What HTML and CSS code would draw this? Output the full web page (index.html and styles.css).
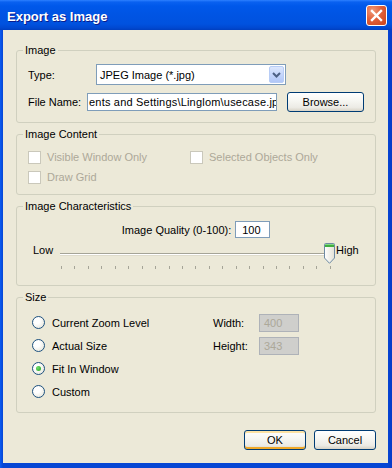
FILE: index.html
```html
<!DOCTYPE html>
<html>

<head>
    <link rel="stylesheet" href="styles.css">
</head>

<body>
    <div class="window">
        <div class="titlebar">
            <span class="title">Export as Image</span>
            <span class="close">
                <svg width="19" height="19" viewBox="0 0 19 19">
                    <path d="M5 5 L14 14 M14 5 L5 14" stroke="#fff" stroke-width="2.4" stroke-linecap="square" />
                </svg>
            </span>
        </div>
        <div class="client">
            <!-- Image -->
            <fieldset class="group group-image">
                <legend>Image</legend>
                <div class="row row-type">
                    <label class="lbl lbl-type">Type:</label>
                    <div class="select">
                        <span class="select-text">JPEG Image (*.jpg)</span>
                        <span class="select-btn">
                            <svg width="9" height="6" viewBox="0 0 9 6">
                                <polyline points="1,1 4.5,4.5 8,1" fill="none" stroke="#4d6185" stroke-width="2" />
                            </svg>
                        </span>
                    </div>
                </div>
                <div class="row row-file">
                    <label class="lbl lbl-file">File Name:</label>
                    <div class="edit edit-file"><span class="scrolled">ents and Settings\Linglom\usecase.jpg</span></div>
                    <button class="btn btn-browse">Browse...</button>
                </div>
            </fieldset>

            <!-- Image Content -->
            <fieldset class="group group-content">
                <legend>Image Content</legend>
                <div class="checks">
                    <div class="check disabled"><span class="box"></span>Visible Window Only</div>
                    <div class="check disabled"><span class="box"></span>Selected Objects Only</div>
                    <div class="check disabled"><span class="box"></span>Draw Grid</div>
                </div>
            </fieldset>

            <!-- Image Characteristics -->
            <fieldset class="group group-chars">
                <legend>Image Characteristics</legend>
                <div class="quality">
                    <span>Image Quality (0-100):</span>
                    <div class="edit edit-quality">100</div>
                </div>
                <div class="slider-row">
                    <span class="low">Low</span>
                    <div class="slider">
                        <div class="track"></div>
                        <div class="ticks">
                            <i></i><i></i><i></i><i></i><i></i><i></i><i></i>
                            <i></i><i></i><i></i><i></i><i></i><i></i><i></i>
                            <i></i><i></i><i></i><i></i><i></i><i></i><i></i>
                        </div>
                        <svg class="thumb" width="11" height="21" viewBox="0 0 11 21">
                            <defs>
                                <linearGradient id="tg" x1="0" y1="0" x2="1" y2="0">
                                    <stop offset="0" stop-color="#ffffff" />
                                    <stop offset="1" stop-color="#e3e1d6" />
                                </linearGradient>
                            </defs>
                            <path d="M0.5 1.5 Q0.5 0.5 1.5 0.5 H9.5 Q10.5 0.5 10.5 1.5 V15 L5.5 20.3 L0.5 15 Z" fill="url(#tg)" stroke="#6e8aa3" />
                            <rect x="1" y="1" width="9" height="3" fill="#3fae3f" />
                            <rect x="1" y="1" width="9" height="1" fill="#86d786" />
                        </svg>
                    </div>
                    <span class="high">High</span>
                </div>
            </fieldset>

            <!-- Size -->
            <fieldset class="group group-size">
                <legend>Size</legend>
                <div class="size-cols">
                    <div class="radios">
                        <div class="radio"><span class="dot"></span>Current Zoom Level</div>
                        <div class="radio"><span class="dot"></span>Actual Size</div>
                        <div class="radio checked"><span class="dot"></span>Fit In Window</div>
                        <div class="radio"><span class="dot"></span>Custom</div>
                    </div>
                    <div class="dims">
                        <div class="dim"><label>Width:</label><div class="edit edit-dim">400</div></div>
                        <div class="dim"><label>Height:</label><div class="edit edit-dim">343</div></div>
                    </div>
                </div>
            </fieldset>

            <div class="buttons">
                <button class="btn btn-default">OK</button>
                <button class="btn">Cancel</button>
            </div>
        </div>
    </div>
</body>

</html>
```

FILE: styles.css
```css
body {
    margin: 0;
    font-family: "Liberation Sans", Arial, sans-serif;
    font-size: 11px;
    color: #000;
}

.window {
    width: 392px;
    height: 468px;
    box-sizing: border-box;
    display: flex;
    flex-direction: column;
    background: linear-gradient(to right, #0b5cf2 0, #0646d4 3px, #0646d4 388px, #0838c6 392px);
}

.titlebar {
    height: 30px;
    flex: none;
    display: flex;
    align-items: center;
    justify-content: space-between;
    padding: 0 5px 0 7px;
    box-sizing: border-box;
    background: linear-gradient(#2d80ff 0, #0a61f0 2px, #0058ea 6px, #0054e3 15px, #0052df 24px, #0048d0 28px, #003fbf 30px);
}

.title {
    color: #fff;
    font-weight: bold;
    font-size: 13px;
    padding-top: 2px;
    text-shadow: 1px 1px #0a1d8c;
}

.close {
    width: 21px;
    height: 21px;
    box-sizing: border-box;
    border: 1px solid #fff;
    border-radius: 3px;
    background: radial-gradient(circle at 30% 25%, #ef9a78 0, #e2603a 45%, #cc4319 100%);
    display: flex;
    align-items: center;
    justify-content: center;
}

.client {
    flex: 1;
    margin: 0 4px 5px 3px;
    background: #ece9d8;
    padding: 14px 12px 0 13px;
    box-sizing: border-box;
}

/* group boxes */
.group {
    margin: 5px 0 0;
    border: 1px solid #d0d0bf;
    border-radius: 3px;
    padding: 0 11px;
    min-width: 0;
}

.group legend {
    padding: 0 2px;
    margin-left: -5px;
    line-height: 13px;
}

.group-image {
    margin-top: 0;
    padding-top: 7px;
    padding-bottom: 10px;
}

.row {
    display: flex;
    align-items: center;
}

.row-type {
    height: 21px;
}

.row-file {
    height: 20px;
    margin-top: 7px;
}

.lbl-type {
    width: 68px;
}

.lbl-file {
    width: 59px;
}

.select {
    width: 190px;
    height: 21px;
    box-sizing: border-box;
    border: 1px solid #7f9db9;
    background: #fff;
    display: flex;
    align-items: center;
    justify-content: space-between;
}

.select-text {
    padding-left: 3px;
}

.select-btn {
    width: 15px;
    height: 17px;
    margin-right: 1px;
    box-sizing: border-box;
    border: 1px solid #b8cdf6;
    border-radius: 2px;
    background: linear-gradient(#dce7fd, #c1d3fb 60%, #b1c7f7);
    display: flex;
    align-items: center;
    justify-content: center;
}

.edit {
    box-sizing: border-box;
    border: 1px solid #7f9db9;
    background: #fff;
    display: flex;
    align-items: center;
    overflow: hidden;
    white-space: nowrap;
}

.edit-file {
    width: 190px;
    height: 18px;
    letter-spacing: 0.2px;
}

.scrolled {
    padding-left: 1px;
}

.btn {
    font-family: "Liberation Sans", Arial, sans-serif;
    font-size: 11px;
    color: #000;
    height: 20px;
    box-sizing: border-box;
    border: 1px solid #003c74;
    border-radius: 3px;
    background: linear-gradient(#ffffff 0, #f7f7f3 40%, #ecebe5 80%, #d8d3c6 100%);
    padding: 0;
}

.btn-browse {
    width: 77px;
    margin-left: 10px;
}

/* image content */
.group-content {
    padding-top: 6px;
    padding-bottom: 7px;
}

.checks {
    display: grid;
    grid-template-columns: 162px auto;
    grid-auto-rows: 20px;
}

.check {
    display: flex;
    align-items: center;
}

.check .box {
    width: 13px;
    height: 13px;
    box-sizing: border-box;
    border: 1px solid #cac8bb;
    background: #fff;
    margin-right: 6px;
}

.check.disabled {
    color: #aca899;
}

/* image characteristics */
.group-chars {
    padding-top: 8px;
    padding-bottom: 16px;
}

.quality {
    height: 17px;
    display: flex;
    align-items: center;
    justify-content: center;
    gap: 4px;
}

.edit-quality {
    width: 35px;
    height: 17px;
    padding-left: 6px;
}

.slider-row {
    display: flex;
    align-items: flex-start;
    margin-top: 5px;
    padding-left: 5px;
}

.low {
    width: 23px;
    margin-top: 1px;
}

.high {
    margin-top: 1px;
}

.slider {
    position: relative;
    width: 280px;
    height: 26px;
    padding-top: 10px;
    box-sizing: border-box;
}

.track {
    height: 3px;
    margin: 0 6px 0 4px;
    box-sizing: border-box;
    border-top: 1px solid #a5a497;
    border-bottom: 1px solid #dedbcb;
    background: #fff;
}

.ticks {
    display: flex;
    justify-content: space-between;
    width: 270px;
    margin: 10px 0 0 5px;
}

.ticks i {
    width: 1px;
    height: 3px;
    background: #a5a497;
}

.thumb {
    position: absolute;
    left: 268px;
    top: 0;
}

/* size */
.group-size {
    padding-top: 7px;
    padding-bottom: 9px;
}

.size-cols {
    display: flex;
}

.radios {
    width: 185px;
}

.radio {
    height: 23px;
    display: flex;
    align-items: center;
}

.radio .dot {
    width: 13px;
    height: 13px;
    box-sizing: border-box;
    border: 1px solid #1c5180;
    border-radius: 50%;
    background: radial-gradient(circle at 35% 35%, #ffffff 30%, #e6e4d8 90%);
    margin: 0 7px 0 4px;
    display: flex;
    align-items: center;
    justify-content: center;
}

.radio.checked .dot::after {
    content: "";
    width: 5px;
    height: 5px;
    border-radius: 50%;
    background: radial-gradient(circle at 35% 35%, #6fdf6b, #21a121);
}

.dim {
    height: 23px;
    display: flex;
    align-items: center;
}

.dim label {
    width: 46px;
}

.edit-dim {
    width: 40px;
    height: 18px;
    padding-left: 4px;
    background: #cfcfcc;
    border-color: #aeb2b8;
    color: #aca899;
}

/* dialog buttons */
.buttons {
    display: flex;
    justify-content: flex-end;
    gap: 8px;
    margin-top: 17px;
}

.buttons .btn {
    width: 62px;
}

.btn-default {
    box-shadow: inset 0 -2px #f0a92a, inset 0 2px #fde3a5;
}
```
